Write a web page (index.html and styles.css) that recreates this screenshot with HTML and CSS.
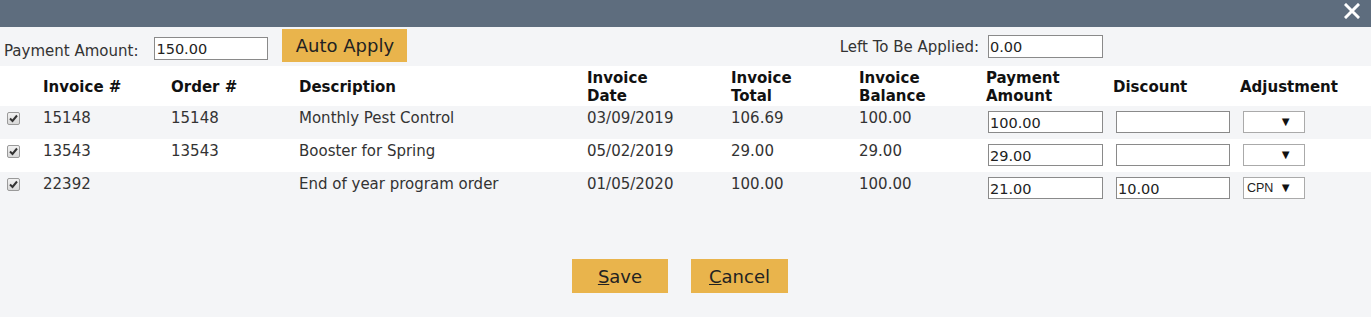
FILE: index.html
```html
<!DOCTYPE html>
<html>
<head>
<meta charset="utf-8">
<link rel="stylesheet" href="styles.css">
</head>
<body>
<div class="dialog">
  <div class="titlebar">
    <svg class="close" width="16" height="16" viewBox="0 0 16 16"><path d="M2 2 L14 14 M14 2 L2 14" stroke="#fff" stroke-width="3" stroke-linecap="square"/></svg>
  </div>
  <div class="toolbar">
    <label class="lbl pay">Payment Amount:</label>
    <input class="txt amt" type="text" value="150.00">
    <button class="btn auto">Auto Apply</button>
    <div class="leftgrp">
      <label class="lbl">Left To Be Applied:</label>
      <input class="txt left" type="text" value="0.00">
    </div>
  </div>
  <table class="grid">
    <colgroup>
      <col style="width:43px"><col style="width:128px"><col style="width:128px"><col style="width:288px"><col style="width:144px"><col style="width:128px"><col style="width:127px"><col style="width:127px"><col style="width:127px"><col>
    </colgroup>
    <thead>
      <tr>
        <th></th><th>Invoice #</th><th>Order #</th><th>Description</th><th>Invoice<br>Date</th><th>Invoice<br>Total</th><th>Invoice<br>Balance</th><th>Payment<br>Amount</th><th>Discount</th><th>Adjustment</th>
      </tr>
    </thead>
    <tbody>
      <tr class="odd">
        <td><span class="chk"><svg width="11" height="11" viewBox="0 0 11 11"><path d="M2 5.5 L4.5 8 L9 2.5" stroke="#333" stroke-width="2" fill="none"/></svg></span></td>
        <td>15148</td><td>15148</td><td>Monthly Pest Control</td><td>03/09/2019</td><td>106.69</td><td>100.00</td>
        <td class="ctl"><input class="txt cell" type="text" value="100.00"></td>
        <td class="ctl"><input class="txt cell" type="text" value=""></td>
        <td class="ctl"><span class="sel"><span class="selval"></span><span class="arr">▼</span></span></td>
      </tr>
      <tr>
        <td><span class="chk"><svg width="11" height="11" viewBox="0 0 11 11"><path d="M2 5.5 L4.5 8 L9 2.5" stroke="#333" stroke-width="2" fill="none"/></svg></span></td>
        <td>13543</td><td>13543</td><td>Booster for Spring</td><td>05/02/2019</td><td>29.00</td><td>29.00</td>
        <td class="ctl"><input class="txt cell" type="text" value="29.00"></td>
        <td class="ctl"><input class="txt cell" type="text" value=""></td>
        <td class="ctl"><span class="sel"><span class="selval"></span><span class="arr">▼</span></span></td>
      </tr>
      <tr class="odd">
        <td><span class="chk"><svg width="11" height="11" viewBox="0 0 11 11"><path d="M2 5.5 L4.5 8 L9 2.5" stroke="#333" stroke-width="2" fill="none"/></svg></span></td>
        <td>22392</td><td></td><td>End of year program order</td><td>01/05/2020</td><td>100.00</td><td>100.00</td>
        <td class="ctl"><input class="txt cell" type="text" value="21.00"></td>
        <td class="ctl"><input class="txt cell" type="text" value="10.00"></td>
        <td class="ctl"><span class="sel"><span class="selval">CPN</span><span class="arr">▼</span></span></td>
      </tr>
    </tbody>
  </table>
  <div class="actions">
    <button class="btn save"><u>S</u>ave</button>
    <button class="btn cancel"><u>C</u>ancel</button>
  </div>
</div>
</body>
</html>
```

FILE: styles.css
```css
* { box-sizing: border-box; }
html, body { margin: 0; padding: 0; }
body {
  background: #f4f5f7;
  font-family: "DejaVu Sans", Verdana, sans-serif;
  font-size: 15px;
  color: #222;
  width: 1371px;
  height: 317px;
  overflow: hidden;
}
.dialog { background: #f4f5f7; height: 317px; }
.titlebar {
  height: 27px;
  background: #5e6d7e;
  display: flex;
  justify-content: flex-end;
  align-items: flex-start;
  padding: 3px 11px 0 0;
}
.toolbar {
  height: 39px;
  display: flex;
  align-items: center;
  padding-left: 4px;
}
.lbl { color: #333; font-size: 15px; }
.pay { margin-top: 9px; }
.txt {
  font-family: "DejaVu Sans", Verdana, sans-serif;
  font-size: 14.5px;
  color: #222;
  border: 1px solid #8a8a8a;
  background: #fff;
  padding: 1px 1px 0;
  margin: 0;
  outline: none;
}
.amt { width: 114px; height: 23px; margin-left: 16px; margin-top: 4px; }
.auto {
  margin-left: 14px;
  width: 125px;
  height: 33px;
  margin-top: -3px;
  font-size: 18px;
}
.leftgrp {
  margin-left: auto;
  margin-right: 268px;
  display: flex;
  align-items: center;
}
.left { width: 115px; height: 23px; margin-left: 9px; margin-top: -1px; }
.btn {
  background: #e9b44c;
  border: none;
  font-family: "DejaVu Sans", Verdana, sans-serif;
  font-size: 18px;
  color: #222;
  padding: 0;
  cursor: pointer;
}
.grid {
  border-collapse: collapse;
  table-layout: fixed;
  width: 1371px;
}
.grid thead tr { background: #fff; height: 40px; }
.grid th {
  text-align: left;
  font-weight: bold;
  font-size: 15px;
  line-height: 18px;
  color: #111;
  padding: 2px 0 0;
  vertical-align: middle;
  white-space: nowrap;
}
.grid tbody tr { height: 33px; background: #fff; }
.grid tbody tr.odd { background: #f4f5f7; }
.grid td {
  vertical-align: top;
  padding: 3px 0 0;
  line-height: 18px;
  color: #333;
  white-space: nowrap;
}
.grid td:first-child { padding: 6px 0 0 7px; }
.grid td.ctl { padding-top: 5px; }
.cell { width: 115px; height: 22px; margin-left: 2px; }
.grid td:nth-child(9) .cell { margin-left: 3px; width: 114px; }
.chk {
  display: inline-block;
  width: 13px;
  height: 13px;
  border: 1px solid #9a9a9a;
  border-radius: 2px;
  background: linear-gradient(#f2f2f2, #d8d8d8);
  position: relative;
  vertical-align: top;
}
.chk svg { position: absolute; left: 0; top: 0; }
.sel {
  display: flex;
  align-items: center;
  justify-content: space-between;
  width: 62px;
  height: 22px;
  margin-left: 3px;
  border: 1px solid #aaa;
  background: #fff;
  font-family: "Liberation Sans", Arial, sans-serif;
  font-size: 12.5px;
  line-height: 16px;
  color: #222;
  padding: 0 12px 0 3px;
}
.arr { font-size: 13px; color: #111; }
.actions {
  display: flex;
  justify-content: center;
  gap: 23px;
  padding: 54px 11px 0 0;
}
.save { width: 96px; height: 34px; }
.cancel { width: 97px; height: 34px; }
```
